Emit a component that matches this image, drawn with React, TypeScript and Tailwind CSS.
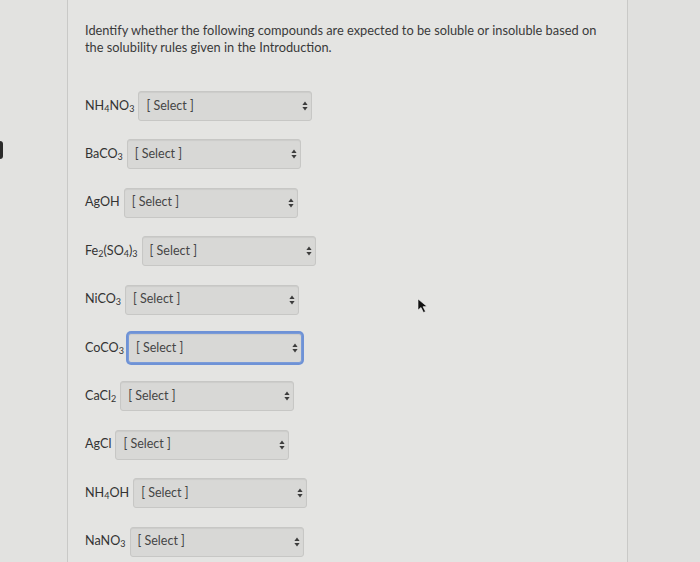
import React from "react";

type Part = { t: string; sub?: boolean };

const rows: { parts: Part[]; focused?: boolean }[] = [
  { parts: [{ t: "NH" }, { t: "4", sub: true }, { t: "NO" }, { t: "3", sub: true }] },
  { parts: [{ t: "BaCO" }, { t: "3", sub: true }] },
  { parts: [{ t: "AgOH" }] },
  { parts: [{ t: "Fe" }, { t: "2", sub: true }, { t: "(SO" }, { t: "4", sub: true }, { t: ")" }, { t: "3", sub: true }] },
  { parts: [{ t: "NiCO" }, { t: "3", sub: true }] },
  { parts: [{ t: "CoCO" }, { t: "3", sub: true }], focused: true },
  { parts: [{ t: "CaCl" }, { t: "2", sub: true }] },
  { parts: [{ t: "AgCl" }] },
  { parts: [{ t: "NH" }, { t: "4", sub: true }, { t: "OH" }] },
  { parts: [{ t: "NaNO" }, { t: "3", sub: true }] },
];

function Arrows() {
  return (
    <svg width="6" height="10" viewBox="0 0 6 10" className="text-[#3c3c3c]">
      <path d="M3 0.5 L5.6 4 H0.4 Z" fill="currentColor" />
      <path d="M3 9.5 L5.6 6 H0.4 Z" fill="currentColor" />
    </svg>
  );
}

function FakeSelect({ focused }: { focused?: boolean }) {
  return (
    <div
      className={
        "flex h-[30px] w-[174px] items-center justify-between rounded-[3px] border bg-[#d8d8d6] pl-[7px] pr-[3px] shadow-[inset_0_1px_1px_rgba(0,0,0,0.06)] " +
        (focused
          ? "border-[#7a9bd8] ring-2 ring-[#6e92d6]"
          : "border-[#c7c7c5]")
      }
    >
      <span className="text-[12.5px] text-[#454545]">[ Select ]</span>
      <Arrows />
    </div>
  );
}

export default function App() {
  return (
    <div
      className="relative flex h-[562px] w-[700px] overflow-hidden bg-[#e2e2e0] text-[#353535]"
      style={{ fontFamily: "Lato, 'Liberation Sans', sans-serif" }}
    >
      <div className="relative w-[67px] shrink-0">
        <div className="absolute left-0 top-[141px] h-[18px] w-[3px] rounded-r bg-[#2a2a2a]" />
      </div>
      <div className="w-[561px] shrink-0 border-x border-[#c9c9c7] bg-[#e4e4e2] pl-[17px] pt-[22px]">
        <p className="w-[520px] text-[12.8px] leading-[17px] text-[#3a3a3a]">
          Identify whether the following compounds are expected to be soluble or insoluble based on
          the solubility rules given in the Introduction.
        </p>
        <div className="mt-[35px] flex flex-col gap-[18.4px]">
          {rows.map((r, i) => (
            <div key={i} className="flex items-center gap-[4px]">
              <span className="text-[12.6px] text-[#333]">
                {r.parts.map((p, j) =>
                  p.sub ? (
                    <sub key={j} className="text-[9px]">
                      {p.t}
                    </sub>
                  ) : (
                    <span key={j}>{p.t}</span>
                  )
                )}
              </span>
              <FakeSelect focused={r.focused} />
            </div>
          ))}
        </div>
      </div>
      <div className="flex-1 bg-[#e0e0de]" />
      <svg
        className="absolute left-[417px] top-[298px]"
        width="12"
        height="16"
        viewBox="0 0 12 16"
      >
        <path d="M1 1 L1 12 L4 9.5 L6.5 14.5 L8.5 13.5 L6 8.7 L10 8.5 Z" fill="#111" stroke="#f2f2f2" strokeWidth="0.6" />
      </svg>
    </div>
  );
}
